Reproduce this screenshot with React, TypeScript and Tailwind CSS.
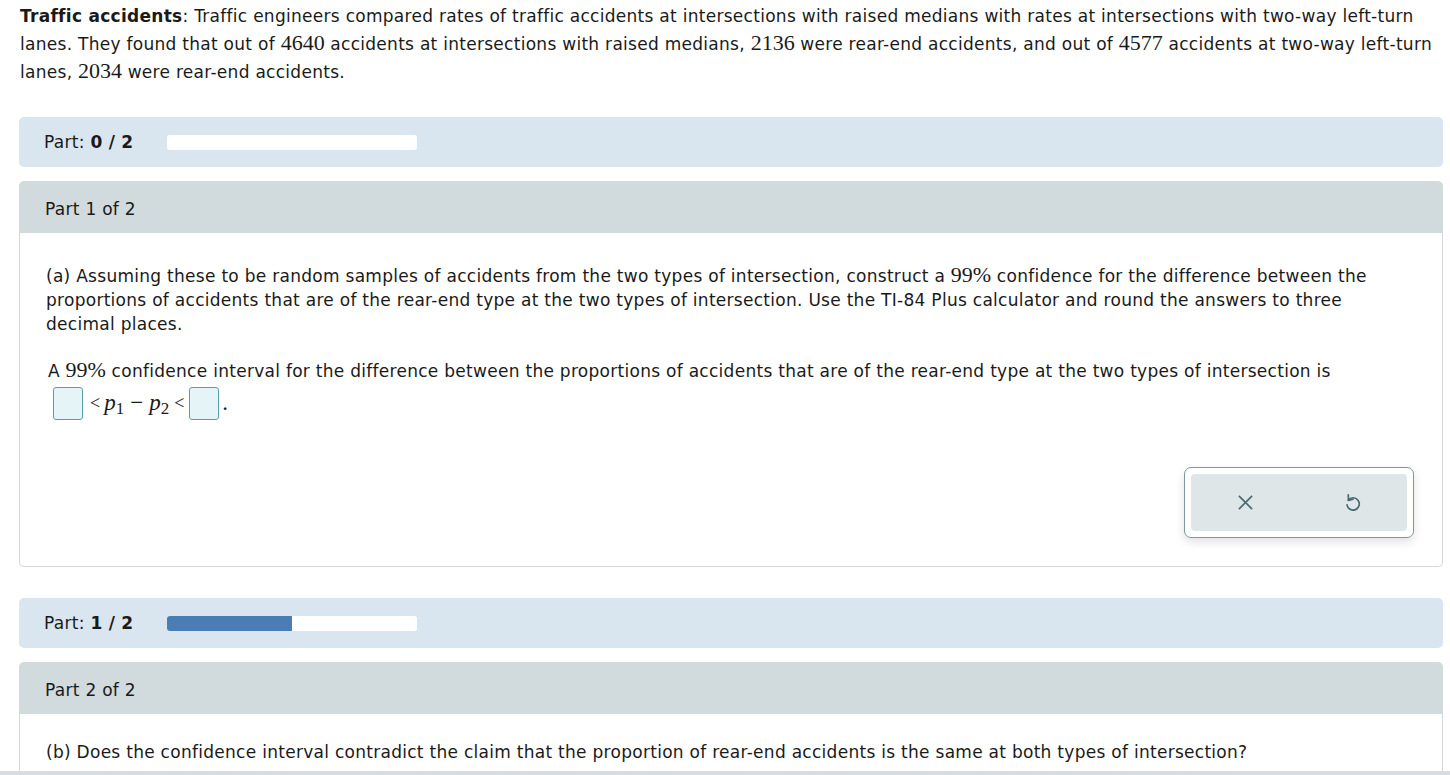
import React from 'react';

const sans = { fontFamily: '"DejaVu Sans", Verdana, sans-serif', letterSpacing: '0.28px' };

const N = ({ children }: { children: React.ReactNode }) => (
  <span className="font-['Liberation_Serif',serif] text-[22px] leading-none tracking-normal">{children}</span>
);

const PartBar = ({ done }: { done: number }) => (
  <div className="flex items-center h-[50px] rounded-[5px] bg-[#dae6ef] pl-[25px] pt-[1px]">
    <span className="text-[17px] text-[#1a1a1a] w-[123px]">
      Part: <b>{done} / 2</b>
    </span>
    <div className="h-[15px] w-[250px] rounded-[3px] bg-white overflow-hidden">
      <div className="h-full bg-[#497db4]" style={{ width: `${(done / 2) * 100}%` }} />
    </div>
  </div>
);

const PartHeader = ({ n }: { n: number }) => (
  <div className="h-[52px] rounded-t-[5px] bg-[#d1dadd] pl-[26px] pt-[5px] flex items-center text-[17px] text-[#1a1a1a]">
    Part {n} of 2
  </div>
);

const AnswerBox = () => (
  <span className="inline-block w-[30px] h-[33px] rounded-[3px] border border-[#5c9ea7] bg-[#e5f4f7] align-middle" />
);

export default function App() {
  return (
    <div style={sans} className="pl-[19px] pr-[7px] text-[#1a1a1a] bg-white min-h-screen">
      <p className="text-[17px] leading-[28px] pt-[2px] pl-[1px] whitespace-nowrap">
        <b>Traffic accidents</b>: Traffic engineers compared rates of traffic accidents at intersections with raised medians with rates at intersections with two-way left-turn
        <br />
        lanes. They found that out of <N>4640</N> accidents at intersections with raised medians, <N>2136</N> were rear-end accidents, and out of <N>4577</N> accidents at two-way left-turn
        <br />
        lanes, <N>2034</N> were rear-end accidents.
      </p>

      <div className="mt-[31px]">
        <PartBar done={0} />
      </div>

      <div className="mt-[14px]">
        <PartHeader n={1} />
        <div className="border border-t-0 border-[#cfd9db] rounded-b-[5px] h-[334px] px-[26px] pt-[31px]">
          <p className="text-[17px] leading-[24px] whitespace-nowrap">
            (a) Assuming these to be random samples of accidents from the two types of intersection, construct a <N>99%</N> confidence for the difference between the
            <br />
            proportions of accidents that are of the rear-end type at the two types of intersection. Use the TI-84 Plus calculator and round the answers to three
            <br />
            decimal places.
          </p>
          <p className="text-[17px] leading-[24px] mt-[23px] pl-[2px] whitespace-nowrap">
            A <N>99%</N> confidence interval for the difference between the proportions of accidents that are of the rear-end type at the two types of intersection is
          </p>
          <div className="flex items-center mt-[3px] pl-[7px] font-['Liberation_Serif',serif] text-[23px] tracking-normal">
            <AnswerBox />
            <span className="ml-[7px] text-[18px]">&lt;</span>
            <span className="italic ml-[4px]">p</span>
            <sub className="text-[17px] relative top-[6px]">1</sub>
            <span className="mx-[6px]">−</span>
            <span className="italic">p</span>
            <sub className="text-[17px] relative top-[6px]">2</sub>
            <span className="ml-[5px] mr-[5px] text-[18px]">&lt;</span>
            <AnswerBox />
            <span className="ml-[3px]">.</span>
          </div>

          <div className="flex justify-end mt-[46px] mr-[2px]">
            <div className="w-[230px] h-[71px] rounded-[7px] border border-[#7f989e] bg-white p-[6px] shadow-[0_4px_10px_rgba(0,0,0,0.12)]">
              <div className="h-full rounded-[4px] bg-[#dfe6e8] flex items-center justify-between px-[45px]">
                <svg width="17" height="17" viewBox="0 0 18 18" className="ml-[1px]">
                  <path d="M2 2 L16 16 M16 2 L2 16" stroke="#4c6a73" strokeWidth="1.8" fill="none" />
                </svg>
                <svg width="19" height="21" viewBox="0 0 20 22">
                  <path d="M5.5 8.5 A6.5 6.5 0 1 1 4.2 13.5" stroke="#4c6a73" strokeWidth="1.8" fill="none" strokeLinecap="round" />
                  <path d="M5.5 3 L5.8 8.7 L10.5 7.5" stroke="#4c6a73" strokeWidth="1.8" fill="none" strokeLinecap="round" strokeLinejoin="round" />
                </svg>
              </div>
            </div>
          </div>
        </div>
      </div>

      <div className="mt-[31px]">
        <PartBar done={1} />
      </div>

      <div className="mt-[14px]">
        <PartHeader n={2} />
        <div className="border border-t-0 border-[#cfd9db] h-[80px] px-[26px] pt-[26px]">
          <p className="text-[17px] leading-[24px] whitespace-nowrap">
            (b) Does the confidence interval contradict the claim that the proportion of rear-end accidents is the same at both types of intersection?
          </p>
        </div>
      </div>

      <div className="fixed left-0 right-0 bottom-0 h-[4px] bg-[#d6dde0]" />
    </div>
  );
}
